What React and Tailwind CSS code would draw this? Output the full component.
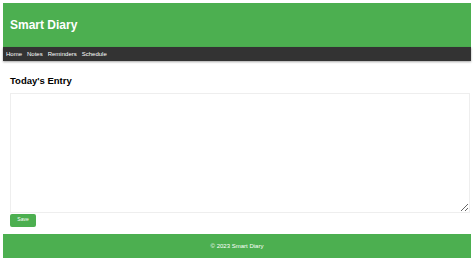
import React from "react";

const navItems = ["Home", "Notes", "Reminders", "Schedule"];

const App = () => {
  return (
    <div className="min-h-[266px] bg-white p-[3px] font-['Liberation_Sans',Arial,sans-serif]">
      {/* Header */}
      <header className="bg-[#4CAF50] h-[44px] flex items-center px-[7px]">
        <h1 className="text-white font-bold text-[12px] leading-none">Smart Diary</h1>
      </header>

      {/* Nav */}
      <nav className="bg-[#333333] h-[14px] flex items-center gap-[5px] px-[3px] shadow-[0_1px_2px_rgba(0,0,0,0.35)]">
        {navItems.map(item => (
          <a key={item} href="#" className="text-white text-[6px] leading-none">
            {item}
          </a>
        ))}
      </nav>

      {/* Main */}
      <main className="px-[7px] pt-[15px]">
        <h2 className="text-black font-bold text-[9.5px] leading-none mb-[7px]">Today's Entry</h2>
        <textarea className="block w-[460px] h-[120px] border border-[#eeeeee] resize-y text-[6px] outline-none" />
        <button
          type="button"
          className="block mt-[1px] bg-[#4CAF50] text-white text-[5px] w-[26px] h-[13px] rounded-[2px]"
        >
          Save
        </button>
      </main>

      {/* Footer */}
      <footer className="mt-[7px] bg-[#4CAF50] h-[24px] flex items-center justify-center">
        <p className="text-white text-[6px] leading-none">© 2023 Smart Diary</p>
      </footer>
    </div>
  );
};

export default App;
